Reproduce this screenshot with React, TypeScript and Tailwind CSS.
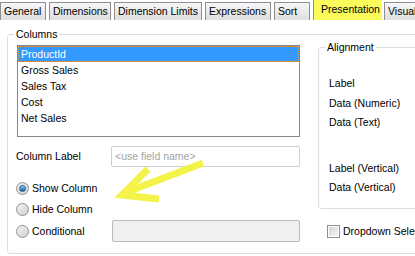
import React from "react";

const TABS = [
  { label: "General", w: "w-[46px]" },
  { label: "Dimensions", w: "w-[62px]" },
  { label: "Dimension Limits", w: "w-[88px]" },
  { label: "Expressions", w: "w-[66px]" },
  { label: "Sort", w: "w-[36px]" },
];

const COLUMNS = ["ProductId", "Gross Sales", "Sales Tax", "Cost", "Net Sales"];

function Tab({ label, w }: { label: string; w: string }) {
  return (
    <div
      className={`${w} h-[18px] shrink-0 border border-b-0 border-[#8c8e94] bg-gradient-to-b from-[#f7f7f7] to-[#dedede] pl-[3px] leading-[17px] whitespace-nowrap overflow-hidden`}
    >
      {label}
    </div>
  );
}

function Radio({ checked, label }: { checked?: boolean; label: string }) {
  return (
    <div className="flex items-center gap-[3px]">
      <div className="flex h-[13px] w-[13px] items-center justify-center rounded-full border border-[#8e8f8f] bg-gradient-to-br from-[#f4f4f4] to-[#cfcfcf]">
        {checked ? (
          <div className="h-[7px] w-[7px] rounded-full border border-[#1d5f8f] bg-gradient-to-b from-[#8fd0f5] to-[#0c5f9e]" />
        ) : null}
      </div>
      <span>{label}</span>
    </div>
  );
}

export default function App() {
  return (
    <div
      className="relative h-[256px] w-[415px] overflow-hidden bg-white text-[10.5px] leading-[13px] text-black"
      style={{ fontFamily: '"Liberation Sans", Arial, sans-serif' }}
    >
      {/* tab strip */}
      <div className="flex h-[20px] items-end">
        {TABS.map((t) => (
          <div key={t.label} className="mr-[3px] flex items-end">
            <Tab label={t.label} w={t.w} />
          </div>
        ))}
        <div className="mr-[2px] h-[20px] w-[69px] shrink-0 border-l border-[#8c8e94] bg-[#fbfb5c] pl-[7px] pt-[2px] leading-[14px]">
          Presentation
        </div>
        <Tab label="Visual" w="w-[40px]" />
      </div>

      {/* Columns group */}
      <fieldset className="ml-[7px] mt-[8px] h-[226px] w-[430px] rounded-[3px] border border-[#d5dfe5] pl-[9px]">
        <legend className="-ml-[3px] px-[2px] leading-[13px]">Columns</legend>
        <div className="flex gap-[18px]">
          {/* left column */}
          <div className="w-[283px] shrink-0">
            <div className="mt-[4px] h-[92px] border border-[#828790] bg-white">
              {COLUMNS.map((c, i) =>
                i === 0 ? (
                  <div
                    key={c}
                    className="h-[16px] border border-dotted border-[#e8a040] bg-[#3399ff] pl-[2px] leading-[14px] text-white"
                  >
                    {c}
                  </div>
                ) : (
                  <div key={c} className="h-[16px] pl-[3px] leading-[16px]">
                    {c}
                  </div>
                ),
              )}
            </div>
            <div className="mt-[9px] flex items-center">
              <span className="w-[95px] shrink-0 -ml-[1px]">Column Label</span>
              <div className="h-[21px] flex-1 rounded-[2px] border border-[#ccd0d4] pl-[3px] leading-[19px] text-[#a3a3a3]">
                &lt;use field name&gt;
              </div>
            </div>
            <div className="mt-[11px] -ml-[1px] flex h-[21px] items-center">
              <Radio checked label="Show Column" />
            </div>
            <div className="-ml-[1px] flex h-[21px] items-center">
              <Radio label="Hide Column" />
            </div>
            <div className="-ml-[1px] flex h-[22px] items-center">
              <div className="w-[96px] shrink-0">
                <Radio label="Conditional" />
              </div>
              <div className="h-[22px] flex-1 rounded-[2px] border border-[#b9bcc0] bg-[#f0f0f0]" />
            </div>
          </div>

          {/* right column */}
          <div className="w-[120px] shrink-0">
            <fieldset className="h-[168px] w-[140px] rounded-[3px] border border-[#d5dfe5] pl-[10px]">
              <legend className="-ml-[4px] px-[2px] leading-[13px]">Alignment</legend>
              <div className="mt-[19px] flex h-[20px] items-center">Label</div>
              <div className="flex h-[20px] items-center">Data (Numeric)</div>
              <div className="flex h-[19px] items-center">Data (Text)</div>
              <div className="mt-[27px] flex h-[19px] items-center">Label (Vertical)</div>
              <div className="flex h-[19px] items-center">Data (Vertical)</div>
            </fieldset>
            <div className="mt-[14px] flex h-[16px] items-center gap-[3px] pl-[9px] whitespace-nowrap">
              <div className="flex h-[13px] w-[13px] shrink-0 items-center justify-center border border-[#8f8f8f] bg-white">
                <div className="h-[9px] w-[9px] bg-gradient-to-br from-[#d4d4d4] to-[#f7f7f7]" />
              </div>
              <span>Dropdown Select</span>
            </div>
          </div>
        </div>
      </fieldset>

      {/* yellow annotation arrow */}
      <svg className="pointer-events-none absolute left-0 top-0" width="415" height="256">
        <g stroke="#f2f23a" strokeWidth="7" fill="none" strokeLinejoin="miter" strokeLinecap="butt" opacity="0.92">
          <line x1="203" y1="163" x2="127" y2="192" />
          <polyline points="148,169 122,195 159,199" />
        </g>
      </svg>
    </div>
  );
}
